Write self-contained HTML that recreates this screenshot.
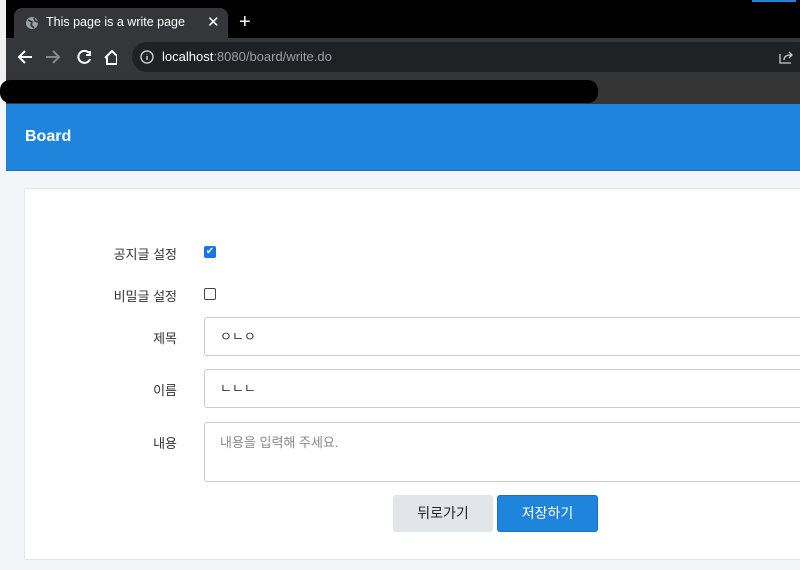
<!DOCTYPE html>
<html><head><meta charset="utf-8"><style>
*{margin:0;padding:0;box-sizing:border-box}
body{width:800px;height:570px;overflow:hidden;background:#f4f5f8;font-family:"Liberation Sans","Noto Sans CJK KR",sans-serif;position:relative}
.a{position:absolute}
.lbl{position:absolute;font-size:13px;color:#333;text-align:right;width:80px;left:97px}
.inp{position:absolute;left:204px;width:620px;border:1px solid #ccc;border-radius:3px;background:#fff;font-size:13px;color:#333;padding-left:15px}
</style></head><body>
<div class="a" style="left:0;top:0;width:800px;height:38px;background:#000"></div>
<div class="a" style="left:0;top:0;width:6px;height:80px;background:#f0f0f0"></div>
<div class="a" style="left:752px;top:0;width:44px;height:2px;background:#1e84dc"></div>
<div class="a" style="left:14px;top:8px;width:214px;height:32px;background:#35363a;border-radius:8px 8px 0 0"></div>
<svg class="a" style="left:25px;top:16px" width="14" height="14"><circle cx="7" cy="7" r="6" fill="#9aa0a6"/><path d="M3 4 L7 6 L6 9 L9 12 M9 2 L10 5 L13 6" stroke="#35363a" stroke-width="1.6" fill="none"/></svg>
<div class="a" style="left:46px;top:15px;font-size:12.5px;color:#fff">This page is a write page</div>
<div class="a" style="left:207px;top:13px;font-size:15px;color:#fff">✕</div>
<div class="a" style="left:239px;top:11px;font-size:20px;color:#fff">+</div>
<div class="a" style="left:6px;top:38px;width:794px;height:34px;background:#35363a"></div>
<svg class="a" style="left:17px;top:48px" width="100" height="18" fill="none" stroke-width="2">
<path d="M2 9H15M8 3L2 9L8 15" stroke="#fff"/>
<path d="M29 9H42M36 3L42 9L36 15" stroke="#888"/>
<path d="M72 5A6 6 0 1 0 73 11M73 3V7H69" stroke="#fff"/>
<path d="M88 10L95 3L102 10M90 9V16H100V9" stroke="#fff"/>
</svg>
<div class="a" style="left:132px;top:42px;width:680px;height:30px;background:#202124;border-radius:15px"></div>
<svg class="a" style="left:140px;top:50px" width="14" height="14"><circle cx="7" cy="7" r="6" stroke="#ccc" fill="none" stroke-width="1.4"/><path d="M7 6V10M7 4V4.5" stroke="#ccc" stroke-width="1.5"/></svg>
<div class="a" style="left:162px;top:49px;font-size:13px;color:#fff">localhost<span style="color:#9aa0a6">:8080/board/write.do</span></div>
<svg class="a" style="left:779px;top:50px" width="16" height="14" fill="none" stroke="#ccc" stroke-width="1.3"><path d="M1 4V13H12M5 10C5 6 8 5 12 5M10 2L13 5L10 8"/></svg>
<div class="a" style="left:6px;top:72px;width:794px;height:32px;background:#353535"></div>
<div class="a" style="left:0;top:80px;width:598px;height:23px;background:#000;border-radius:10px"></div>
<div class="a" style="left:6px;top:104px;width:794px;height:67px;background:#1e84dc;border-bottom:1px solid #1a6fc0"></div>
<div class="a" style="left:25px;top:128px;font-size:16px;font-weight:bold;color:#fff">Board</div>
<div class="a" style="left:24px;top:188px;width:790px;height:372px;background:#fff;border:1px solid #e3e5ea"></div>
<div class="lbl" style="top:244px">공지글 설정</div>
<div class="a" style="left:204px;top:246px;width:12px;height:12px;background:#1a73e8;border-radius:2px;color:#fff;font-size:10px;line-height:12px;text-align:center">✔</div>
<div class="lbl" style="top:286px">비밀글 설정</div>
<div class="a" style="left:204px;top:288px;width:12px;height:12px;border:1px solid #444;border-radius:2px"></div>
<div class="lbl" style="top:328px">제목</div>
<div class="inp" style="top:317px;height:39px;line-height:37px">ㅇㄴㅇ</div>
<div class="lbl" style="top:380px">이름</div>
<div class="inp" style="top:369px;height:39px;line-height:37px">ㄴㄴㄴ</div>
<div class="lbl" style="top:433px">내용</div>
<div class="inp" style="top:422px;height:60px;padding-top:9px;color:#888">내용을 입력해 주세요.</div>
<div class="a" style="left:393px;top:495px;width:100px;height:37px;background:#e2e5e9;border-radius:3px;font-size:14px;color:#222;text-align:center;line-height:37px">뒤로가기</div>
<div class="a" style="left:497px;top:495px;width:101px;height:37px;background:#1e84dc;border:1px solid #1a70c8;border-radius:3px;font-size:14px;color:#fff;text-align:center;line-height:35px">저장하기</div>
</body></html>
